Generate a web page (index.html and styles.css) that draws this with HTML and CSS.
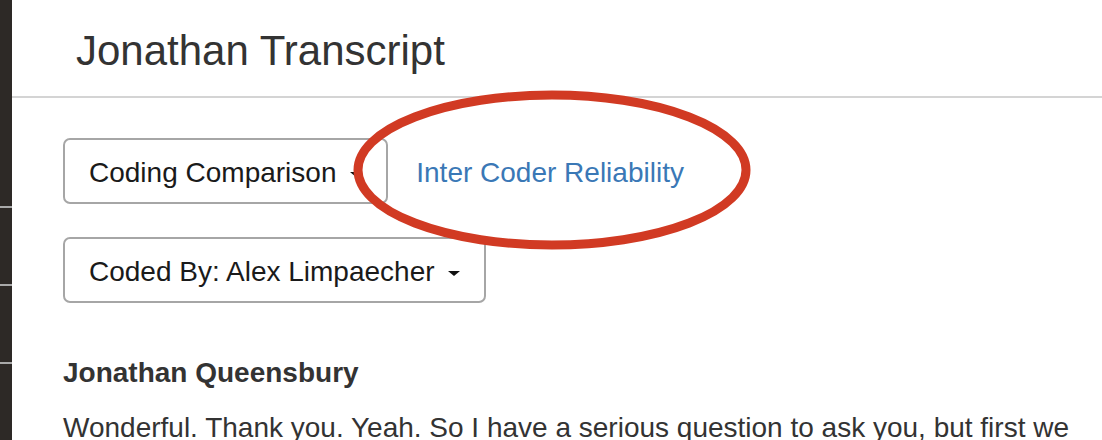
FILE: index.html
```html
<!DOCTYPE html>
<html lang="en">
<head>
<meta charset="utf-8">
<title>Jonathan Transcript</title>
<link rel="stylesheet" href="styles.css">
</head>
<body>
<div class="app">
  <nav class="sidebar">
    <div class="sb-top"></div>
    <div class="sb-item"></div>
    <div class="sb-item"></div>
    <div class="sb-item"></div>
  </nav>
  <main class="main">
    <header class="page-header">
      <h1 class="title">Jonathan Transcript</h1>
    </header>
    <section class="content">
      <div class="toolbar">
        <button class="btn" type="button">Coding Comparison <span class="caret"></span></button>
        <a class="btn-link" href="#">Inter Coder Reliability</a>
      </div>
      <div class="toolbar">
        <button class="btn" type="button">Coded By: Alex Limpaecher <span class="caret"></span></button>
      </div>
      <div class="transcript">
        <h4 class="speaker">Jonathan Queensbury</h4>
        <p class="utterance">Wonderful. Thank you. Yeah. So I have a serious question to ask you, but first we wanted to start off with a few simple ones.</p>
      </div>
    </section>
    <svg class="annotation" width="404" height="164" viewBox="0 0 404 164" aria-hidden="true">
      <ellipse cx="201" cy="80" rx="194" ry="75" fill="none" stroke="#d13a23" stroke-width="9"/>
    </svg>
  </main>
</div>
</body>
</html>
```

FILE: styles.css
```css
html, body {
  margin: 0;
  padding: 0;
  background: #ffffff;
}

body {
  font-family: "Liberation Sans", Arial, Helvetica, sans-serif;
  height: 440px;
  overflow: hidden;
}

.app {
  display: flex;
  height: 440px;
}

.sidebar {
  width: 12px;
  flex: 0 0 12px;
  background: #2d2926;
  display: flex;
  flex-direction: column;
}

.sb-top {
  height: 206px;
}

.sb-item {
  height: 76px;
  border-top: 2px solid #a9a9a9;
}

.main {
  flex: 1;
  position: relative;
  min-width: 0;
}

.page-header {
  border-bottom: 2px solid #d4d4d4;
  padding: 29px 0 24px 64px;
}

.title {
  margin: 0;
  font-size: 42px;
  line-height: 43px;
  font-weight: normal;
  color: #333333;
}

.content {
  padding: 40px 24px 0 51px;
}

.toolbar {
  display: flex;
  align-items: flex-start;
  gap: 4px;
  margin-bottom: 33px;
}

.btn {
  font-family: inherit;
  font-size: 28px;
  line-height: 38px;
  color: #1a1a1a;
  background: #ffffff;
  border: 2px solid #a6a6a6;
  border-radius: 7px;
  padding: 14px 24px 10px 24px;
  margin: 0;
  white-space: nowrap;
}

.caret {
  display: inline-block;
  width: 0;
  height: 0;
  margin-left: 6px;
  vertical-align: middle;
  border-top: 5px solid #111111;
  border-left: 6px solid transparent;
  border-right: 6px solid transparent;
}

.btn-link {
  font-size: 28px;
  line-height: 38px;
  padding: 16px 24px 10px 24px;
  color: #3a78b6;
  text-decoration: none;
}

.transcript {
  margin-top: 50px;
}

.speaker {
  margin: 0;
  font-size: 28px;
  line-height: 40px;
  font-weight: bold;
  color: #333333;
}

.utterance {
  margin: 15px 0 0 0;
  font-size: 28px;
  line-height: 40px;
  color: #333333;
}

.annotation {
  position: absolute;
  left: 339px;
  top: 90px;
}
```
